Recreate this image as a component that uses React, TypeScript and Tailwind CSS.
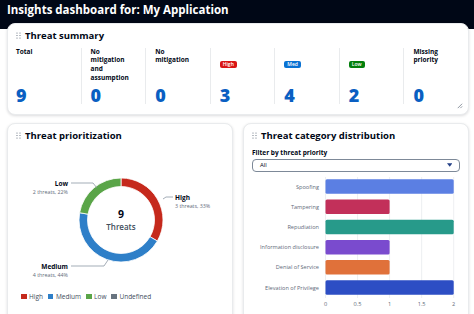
import React from "react"

const summary = [
  { lines: ["Total"], value: 9 },
  { lines: ["No", "mitigation", "and", "assumption"], value: 0 },
  { lines: ["No", "mitigation"], value: 0 },
  { badge: "High", badgeClass: "bg-[#d91515]", value: 3 },
  { badge: "Med", badgeClass: "bg-[#0972d3]", value: 4 },
  { badge: "Low", badgeClass: "bg-[#037f0c]", value: 2 },
  { lines: ["Missing", "priority"], value: 0 },
]

const segments = [
  { name: "High", from: 0, to: 120, color: "#c5291c" },
  { name: "Medium", from: 120, to: 280, color: "#2e7fc8" },
  { name: "Low", from: 280, to: 360, color: "#5aa548" },
]

const legend = [
  { name: "High", color: "bg-[#c5291c]" },
  { name: "Medium", color: "bg-[#2e7fc8]" },
  { name: "Low", color: "bg-[#5aa548]" },
  { name: "Undefined", color: "bg-[#687480]" },
]

const categories = [
  { name: "Spoofing", value: 2, color: "#5b7fe3" },
  { name: "Tampering", value: 1, color: "#c2305a" },
  { name: "Repudiation", value: 2, color: "#279a8a" },
  { name: "Information disclosure", value: 1, color: "#7a4bce" },
  { name: "Denial of Service", value: 1, color: "#e0713a" },
  { name: "Elevation of Privilege", value: 2, color: "#2d4ec4" },
]

function DragHandle() {
  return (
    <svg viewBox="0 0 5 7" className="w-[5px] h-[7px] shrink-0" fill="#5f6b7a">
      <circle cx="1" cy="1" r="0.6" />
      <circle cx="4" cy="1" r="0.6" />
      <circle cx="1" cy="3.5" r="0.6" />
      <circle cx="4" cy="3.5" r="0.6" />
      <circle cx="1" cy="6" r="0.6" />
      <circle cx="4" cy="6" r="0.6" />
    </svg>
  )
}

function CardHeader({ title }: { title: string }) {
  return (
    <div className="flex items-center gap-[4px] h-[13px]">
      <DragHandle />
      <h2 className="text-[9.5px] leading-[13px] font-bold text-[#000716]">{title}</h2>
    </div>
  )
}

function ringPath(cx: number, cy: number, R: number, r: number, a0: number, a1: number) {
  const p = (rad: number, a: number) => {
    const t = (a * Math.PI) / 180
    return `${(cx + rad * Math.sin(t)).toFixed(2)} ${(cy - rad * Math.cos(t)).toFixed(2)}`
  }
  const large = a1 - a0 > 180 ? 1 : 0
  return `M ${p(R, a0)} A ${R} ${R} 0 ${large} 1 ${p(R, a1)} L ${p(r, a1)} A ${r} ${r} 0 ${large} 0 ${p(r, a0)} Z`
}

function Donut() {
  const cx = 113
  const cy = 74
  return (
    <svg viewBox="0 0 226 140" className="block w-[226px] h-[140px]">
      {segments.map((s) => (
        <path
          key={s.name}
          d={ringPath(cx, cy, 42, 33.5, s.from, s.to)}
          fill={s.color}
          stroke="#ffffff"
          strokeWidth="0.8"
        />
      ))}
      <text x={cx} y="72" textAnchor="middle" fontSize="10.5" fontWeight="700" fill="#000716">
        9
      </text>
      <text x={cx} y="83.5" textAnchor="middle" fontSize="8" fontWeight="600" fill="#414d5c">
        Threats
      </text>

      {/* leader lines */}
      <polyline points="63,37 85,37 89,42" fill="none" stroke="#7d8998" strokeWidth="0.7" />
      <polyline points="155,53 158,51 165,51" fill="none" stroke="#7d8998" strokeWidth="0.7" />
      <polyline points="63,120 96,120 100,114" fill="none" stroke="#7d8998" strokeWidth="0.7" />

      <text x="60" y="39.5" textAnchor="end" fontSize="6.5" fontWeight="700" fill="#000716">
        Low
      </text>
      <text x="60" y="48" textAnchor="end" fontSize="5.3" fill="#5f6b7a">
        2 threats, 22%
      </text>
      <text x="167" y="53.5" fontSize="6.5" fontWeight="700" fill="#000716">
        High
      </text>
      <text x="167" y="62" fontSize="5.3" fill="#5f6b7a">
        3 threats, 33%
      </text>
      <text x="60" y="122.5" textAnchor="end" fontSize="6.5" fontWeight="700" fill="#000716">
        Medium
      </text>
      <text x="60" y="131" textAnchor="end" fontSize="5.3" fill="#5f6b7a">
        4 threats, 44%
      </text>
    </svg>
  )
}

function BarChart() {
  const x0 = 81.5
  const unit = 64.1
  const ticks = [0, 0.5, 1, 1.5, 2]
  return (
    <svg viewBox="0 0 226 140" className="block w-[226px] h-[140px]">
      {ticks.map((t) => (
        <line key={t} x1={x0 + t * unit} x2={x0 + t * unit} y1="2" y2="123" stroke="#e9ebed" strokeWidth="0.8" />
      ))}
      {categories.map((c, i) => {
        const y = 4.3 + i * 20.2
        return (
          <g key={c.name}>
            <rect x={x0} y={y} width={c.value * unit} height="14.5" rx="1.5" fill={c.color} />
            <text x="75" y={y + 9.3} textAnchor="end" fontSize="5.6" fill="#5f6b7a">
              {c.name}
            </text>
          </g>
        )
      })}
      {ticks.map((t) => (
        <text key={t} x={x0 + t * unit} y="131" textAnchor="middle" fontSize="5.6" fill="#5f6b7a">
          {t}
        </text>
      ))}
    </svg>
  )
}

export default function App() {
  return (
    <div className="h-[314px] overflow-hidden bg-white font-['Open_Sans',sans-serif] text-[#000716]">
      <div className="h-[29px] bg-[#000716] px-[7px] pt-[2px]">
        <h1 className="text-[11.5px] leading-[16px] font-bold text-white">Insights dashboard for: My Application</h1>
      </div>

      <div className="pl-[7px] pr-[5px] -mt-[6px]">
        {/* Threat summary */}
        <div className="relative bg-white rounded-[8px] border border-[#e9ebed] shadow-[0_1px_3px_rgba(0,7,22,0.14)] pl-[8px] pt-[5px] pb-[10px]">
          <CardHeader title="Threat summary" />
          <div className="grid grid-cols-7 mt-[5.5px]">
            {summary.map((s, i) => (
              <div
                key={i}
                className={`flex flex-col justify-between h-[56px] ${i > 0 ? "border-l border-[#e9ebed] pl-[9px]" : ""}`}
              >
                <div>
                  {s.badge ? (
                    <span
                      className={`inline-block mt-[2.5px] px-[3px] rounded-[2px] text-[5px] leading-[7px] font-semibold text-white ${s.badgeClass}`}
                    >
                      {s.badge}
                    </span>
                  ) : (
                    <div className="text-[6.5px] leading-[8.7px] font-bold text-[#000716]">
                      {s.lines?.map((l) => (
                        <div key={l}>{l}</div>
                      ))}
                    </div>
                  )}
                </div>
                <div className="text-[18px] leading-[18px] font-extrabold text-[#0a5fc2]">{s.value}</div>
              </div>
            ))}
          </div>
          <svg viewBox="0 0 8 8" className="absolute right-[5px] bottom-[5px] w-[7px] h-[7px]" stroke="#5f6b7a" strokeWidth="0.8">
            <line x1="7" y1="2" x2="2" y2="7" />
            <line x1="7" y1="5" x2="5" y2="7" />
          </svg>
        </div>

        <div className="grid grid-cols-2 gap-[10px] mt-[8px]">
          {/* Threat prioritization */}
          <div className="h-[210px] bg-white rounded-[8px] border border-[#e9ebed] shadow-[0_1px_3px_rgba(0,7,22,0.14)] pt-[5px]">
            <div className="px-[8px]">
              <CardHeader title="Threat prioritization" />
            </div>
            <div className="mt-[4px]">
              <Donut />
            </div>
            <div className="flex items-center gap-[5px] px-[13px] mt-[7px]">
              {legend.map((l) => (
                <div key={l.name} className="flex items-center gap-[2.5px]">
                  <span className={`w-[5.5px] h-[5.5px] ${l.color}`} />
                  <span className="text-[6.5px] leading-[8px] text-[#414d5c]">{l.name}</span>
                </div>
              ))}
            </div>
          </div>

          {/* Threat category distribution */}
          <div className="h-[210px] bg-white rounded-[8px] border border-[#e9ebed] shadow-[0_1px_3px_rgba(0,7,22,0.14)] pt-[5px]">
            <div className="px-[8px]">
              <CardHeader title="Threat category distribution" />
              <div className="mt-[6px] text-[6.5px] leading-[9px] font-bold text-[#000716]">Filter by threat priority</div>
              <div className="mt-[2px] h-[13px] flex items-center justify-between rounded-[4px] border border-[#7d8998] px-[7px]">
                <span className="text-[6px] text-[#000716]">All</span>
                <svg viewBox="0 0 6 4" className="w-[5.5px] h-[4px]" fill="#233f86">
                  <path d="M0 0 L6 0 L3 4 Z" />
                </svg>
              </div>
            </div>
            <div className="mt-[3px]">
              <BarChart />
            </div>
          </div>
        </div>
      </div>
    </div>
  )
}
